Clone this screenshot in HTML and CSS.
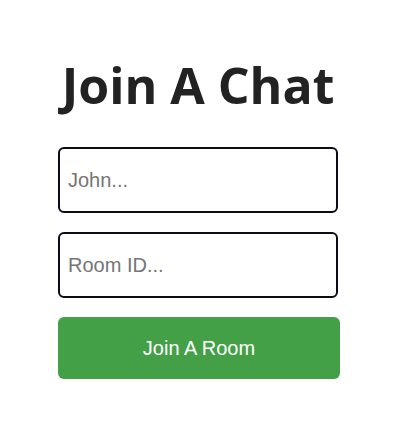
FILE: index.html
```html
<!DOCTYPE html>
<html>
<head>
<meta charset="utf-8">
<link rel="stylesheet" href="styles.css">
</head>
<body>
<div class="join">
  <h1 class="title">Join A Chat</h1>
  <input class="field" type="text" placeholder="John...">
  <input class="field" type="text" placeholder="Room ID...">
  <button class="btn">Join A Room</button>
</div>
</body>
</html>
```

FILE: styles.css
```css
html, body {
  margin: 0;
  padding: 0;
  background: #ffffff;
}
.join {
  width: 280px;
  margin-left: 58px;
  padding-top: 53px;
  display: flex;
  flex-direction: column;
}
.title {
  margin: 0 0 29px 0;
  font-family: "Open Sans", sans-serif;
  font-weight: 700;
  font-size: 50px;
  line-height: 65px;
  color: #222222;
  text-align: center;
}
.field {
  box-sizing: border-box;
  width: 280px;
  height: 66px;
  margin: 0 0 19px 0;
  padding: 0 8px;
  border: 2px solid #0b0b1a;
  border-radius: 6px;
  font-family: "Liberation Sans", Arial, sans-serif;
  font-size: 20px;
  color: #222;
  outline: none;
}
.field::placeholder {
  color: #757575;
}
.btn {
  box-sizing: border-box;
  width: 282px;
  height: 62px;
  margin-top: 0;
  border: none;
  border-radius: 6px;
  background: #43a047;
  color: #ffffff;
  font-family: "Liberation Sans", Arial, sans-serif;
  font-size: 20px;
}
```
